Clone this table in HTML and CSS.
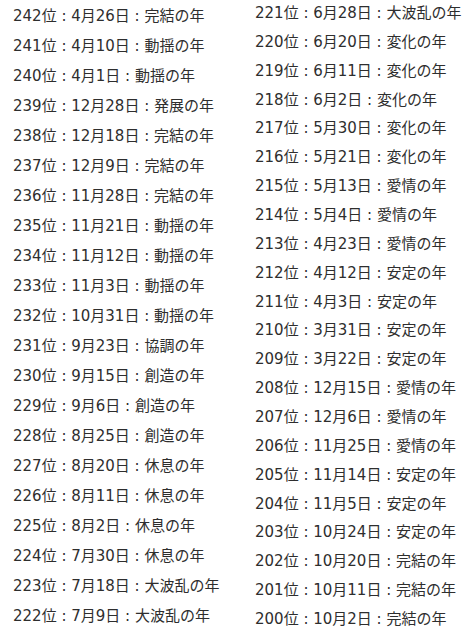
FILE: index.html
```html
<!DOCTYPE html>
<html lang="ja">
<head>
<meta charset="utf-8">
<link rel="stylesheet" href="styles.css">
</head>
<body>
<div class="page">
  <ul class="col col-left">
    <li>242位 : 4月26日 : 完結の年</li>
    <li>241位 : 4月10日 : 動揺の年</li>
    <li>240位 : 4月1日 : 動揺の年</li>
    <li>239位 : 12月28日 : 発展の年</li>
    <li>238位 : 12月18日 : 完結の年</li>
    <li>237位 : 12月9日 : 完結の年</li>
    <li>236位 : 11月28日 : 完結の年</li>
    <li>235位 : 11月21日 : 動揺の年</li>
    <li>234位 : 11月12日 : 動揺の年</li>
    <li>233位 : 11月3日 : 動揺の年</li>
    <li>232位 : 10月31日 : 動揺の年</li>
    <li>231位 : 9月23日 : 協調の年</li>
    <li>230位 : 9月15日 : 創造の年</li>
    <li>229位 : 9月6日 : 創造の年</li>
    <li>228位 : 8月25日 : 創造の年</li>
    <li>227位 : 8月20日 : 休息の年</li>
    <li>226位 : 8月11日 : 休息の年</li>
    <li>225位 : 8月2日 : 休息の年</li>
    <li>224位 : 7月30日 : 休息の年</li>
    <li>223位 : 7月18日 : 大波乱の年</li>
    <li>222位 : 7月9日 : 大波乱の年</li>
  </ul>
  <ul class="col col-right">
    <li>221位 : 6月28日 : 大波乱の年</li>
    <li>220位 : 6月20日 : 変化の年</li>
    <li>219位 : 6月11日 : 変化の年</li>
    <li>218位 : 6月2日 : 変化の年</li>
    <li>217位 : 5月30日 : 変化の年</li>
    <li>216位 : 5月21日 : 変化の年</li>
    <li>215位 : 5月13日 : 愛情の年</li>
    <li>214位 : 5月4日 : 愛情の年</li>
    <li>213位 : 4月23日 : 愛情の年</li>
    <li>212位 : 4月12日 : 安定の年</li>
    <li>211位 : 4月3日 : 安定の年</li>
    <li>210位 : 3月31日 : 安定の年</li>
    <li>209位 : 3月22日 : 安定の年</li>
    <li>208位 : 12月15日 : 愛情の年</li>
    <li>207位 : 12月6日 : 愛情の年</li>
    <li>206位 : 11月25日 : 愛情の年</li>
    <li>205位 : 11月14日 : 安定の年</li>
    <li>204位 : 11月5日 : 安定の年</li>
    <li>203位 : 10月24日 : 安定の年</li>
    <li>202位 : 10月20日 : 完結の年</li>
    <li>201位 : 10月11日 : 完結の年</li>
    <li>200位 : 10月2日 : 完結の年</li>
  </ul>
</div>
</body>
</html>
```
FILE: styles.css
```css
html, body {
  margin: 0;
  padding: 0;
  background: #ffffff;
}
.page {
  display: grid;
  grid-template-columns: 242px 1fr;
  padding-left: 13px;
  font-family: "DejaVu Sans", "Noto Sans CJK JP", sans-serif;
  font-size: 15px;
  color: #2e2e2e;
}
.col {
  list-style: none;
  margin: 0;
  padding: 0;
}
.col li {
  white-space: nowrap;
}
.col-left {
  padding-top: 1px;
}
.col-left li {
  height: 30px;
  line-height: 30px;
}
.col-right {
  margin-top: -1px;
}
.col-right li {
  height: 28.86px;
  line-height: 28.86px;
}
```
